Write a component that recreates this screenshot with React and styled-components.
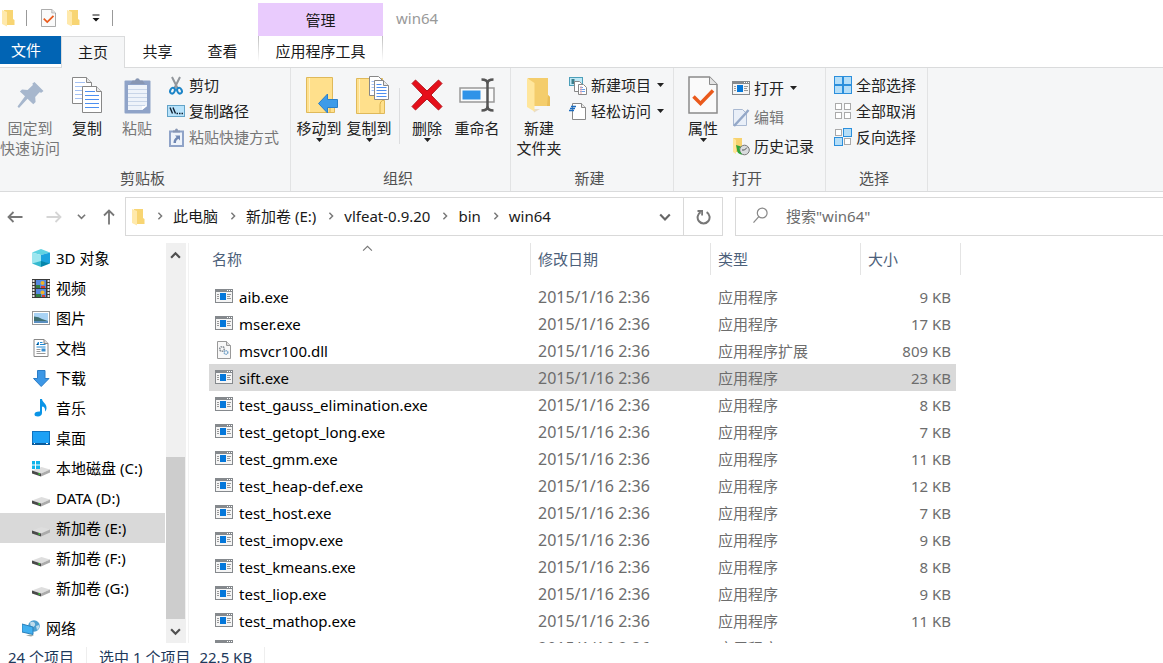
import { useState } from 'react';
import styled, { createGlobalStyle } from 'styled-components';

const FOLDERS = ['此电脑', '新加卷 (E:)', 'vlfeat-0.9.20', 'bin', 'win64'];

const PLACES = [
  { name: '3D 对象', icon: <CubeIcon /> },
  { name: '视频', icon: <FilmIcon /> },
  { name: '图片', icon: <PictureIcon /> },
  { name: '文档', icon: <DocumentIcon /> },
  { name: '下载', icon: <DownloadIcon /> },
  { name: '音乐', icon: <MusicIcon /> },
  { name: '桌面', icon: <DesktopIcon /> },
  { name: '本地磁盘 (C:)', icon: <DriveIcon system /> },
  { name: 'DATA (D:)', icon: <DriveIcon /> },
  { name: '新加卷 (E:)', icon: <DriveIcon /> },
  { name: '新加卷 (F:)', icon: <DriveIcon /> },
  { name: '新加卷 (G:)', icon: <DriveIcon /> },
];

const FILES = [
  ['aib.exe', 9],
  ['mser.exe', 17],
  ['msvcr100.dll', 809],
  ['sift.exe', 23],
  ['test_gauss_elimination.exe', 8],
  ['test_getopt_long.exe', 7],
  ['test_gmm.exe', 11],
  ['test_heap-def.exe', 12],
  ['test_host.exe', 7],
  ['test_imopv.exe', 9],
  ['test_kmeans.exe', 8],
  ['test_liop.exe', 9],
  ['test_mathop.exe', 11],
  ['test_mathop_abs.exe', 8],
];

const GlobalStyle = createGlobalStyle`
  * {
    box-sizing: border-box;
  }
  body {
    margin: 0;
    background: #fff;
    overflow: hidden;
  }
  body, button, input {
    font: 15px/20px 'Noto Sans', 'Noto Sans CJK SC', sans-serif;
    color: #1a1a1a;
  }
  button {
    padding: 0;
    border: 0;
    background: none;
    white-space: nowrap;
  }
  a {
    color: inherit;
    text-decoration: none;
  }
  svg {
    display: block;
    flex: none;
  }
`;

const Window = styled.div`
  height: 100vh;
  display: flex;
  flex-direction: column;
`;

const TitleBar = styled.header`
  display: flex;
  height: 36px;
  flex: none;
`;

const QuickAccess = styled.div`
  width: 258px;
  padding-left: 2px;
  display: flex;
  align-items: center;
  gap: 11px;
`;

const QuickLine = styled.span`
  width: 1px;
  height: 16px;
  margin-right: 3px;
  background: #999;
`;

const IconButton = styled.button`
  display: flex;
  align-items: center;
  justify-content: center;
`;

const ToolTitle = styled.div`
  width: 125px;
  margin-top: 3px;
  background: #e9cbfd;
  line-height: 34px;
  text-align: center;
`;

const WindowTitle = styled.div`
  padding-left: 13px;
  line-height: 36px;
  color: #999;
`;

const Tabs = styled.nav`
  display: flex;
  height: 31px;
  flex: none;
`;

const FileTab = styled.button`
  width: 61px;
  height: 28px;
  padding-right: 9px;
  background: #0164b4;
  color: #fff;
`;

const Tab = styled.button`
  width: ${({ $active }) => ($active ? 64 : 65)}px;
  height: ${({ $active }) => ($active ? 32 : 31)}px;
  padding-bottom: 2px;
  background: ${({ $active }) => ($active ? '#f5f6f7' : 'none')};
  border: ${({ $active }) => ($active ? '1px solid #dadbdc' : '0')};
  border-bottom: 0;
  position: relative;
`;

const ToolTab = styled.button`
  width: 125px;
  margin-left: 3px;
  padding-bottom: 2px;
  border: solid;
  border-width: 0 1px;
  border-image: linear-gradient(#bbb, #fff 80%) 1;
`;

const Ribbon = styled.div`
  display: flex;
  flex: none;
  height: 125px;
  background: #f5f6f7;
  border-top: 1px solid #dadbdc;
  border-bottom: 1px solid #dadbdc;
`;

const Group = styled.section`
  width: ${({ $width }) => $width}px;
  display: flex;
  flex: none;
  flex-direction: column;
  padding-top: 4px;
  border-right: 1px solid #e2e3e4;
`;

const GroupTools = styled.div`
  display: flex;
  flex: 1;
  align-items: flex-start;
  padding-left: ${({ $left }) => $left}px;
`;

const GroupTitle = styled.div`
  height: 23px;
  padding-right: 5px;
  text-align: center;
  color: #505050;
`;

const GroupLine = styled.span`
  width: 1px;
  height: 56px;
  margin: 16px 4px 0 5px;
  background: #dcdddf;
`;

const Big = styled.button`
  width: ${({ $width }) => $width}px;
  display: flex;
  flex-direction: column;
  align-items: center;
  color: ${({ disabled }) => (disabled ? '#777' : '#222')};
`;

const BigIcon = styled.span`
  height: 46px;
  display: flex;
  align-items: center;
`;

const Stack = styled.div`
  display: flex;
  flex-direction: column;
  padding-left: ${({ $left }) => $left}px;
  padding-top: ${({ $tall }) => ($tall ? 3 : 0)}px;
  gap: ${({ $tall }) => ($tall ? 3 : 0)}px;
`;

const Small = styled.button`
  height: 26px;
  display: flex;
  align-items: center;
  gap: 4px;
  color: ${({ disabled }) => (disabled ? '#777' : '#222')};

  > svg {
    margin-left: 2px;
  }
`;

const SmallIcon = styled.span`
  width: 18px;
  display: flex;
  justify-content: center;
`;

const NavBar = styled.div`
  display: flex;
  flex: none;
  padding: 5px 0 4px;
`;

const Arrows = styled.div`
  width: 125px;
  padding-left: 7px;
  display: flex;
  align-items: center;
  gap: 15px;

  button:first-child {
    margin-right: 8px;
  }
`;

const Address = styled.div`
  flex: 0 1 598px;
  height: 39px;
  padding-left: 6px;
  display: flex;
  align-items: center;
  border: 1px solid #d9d9d9;
`;

const Crumb = styled.span`
  display: flex;
  align-items: center;
  gap: 9px;
  padding: 0 0 2px 11px;
`;

const AddressEnd = styled.div`
  display: flex;
  height: 100%;
  margin-left: auto;
  gap: 12px;
`;

const Refresh = styled(IconButton)`
  width: 39px;
  border-left: 1px solid #d9d9d9;
`;

const Search = styled.label`
  flex: 1;
  height: 39px;
  margin-left: 12px;
  padding: 0 0 2px 16px;
  display: flex;
  align-items: center;
  gap: 17px;
  border: 1px solid #d9d9d9;
  border-right: 0;
`;

const SearchInput = styled.input`
  flex: 1;
  min-width: 0;
  padding: 0;
  border: 0;
  outline: 0;

  &::placeholder {
    color: #6d6d6d;
    opacity: 1;
  }
`;

const Body = styled.div`
  display: flex;
  flex: 1;
  min-height: 0;
  padding-top: 3px;
  overflow: hidden;
`;

const Sidebar = styled.nav`
  width: 165px;
  flex: none;
  overflow: hidden;
`;

const Place = styled.a`
  height: 30px;
  padding-left: 32px;
  display: flex;
  align-items: center;
  gap: 6px;
  color: #000;
  background: ${({ $active }) => ($active ? '#d9d9d9' : 'none')};

  svg {
    width: 18px;
  }
`;

const Network = styled(Place)`
  margin-top: 10px;
  padding-left: 22px;
`;

const ScrollBar = styled.div`
  width: 20px;
  margin-left: 1px;
  padding-right: 1px;
  flex: none;
  display: flex;
  flex-direction: column;
  background: #f0f0f0;
`;

const ScrollButton = styled(IconButton)`
  height: 24px;
`;

const ScrollTrack = styled.div`
  flex: 1;
  display: flex;
  align-items: flex-end;
`;

const ScrollThumb = styled.div`
  width: 100%;
  height: 46%;
  background: #cdcdcd;
`;

const Files = styled.main`
  flex: 1;
  margin-left: 2px;
  padding-left: 20px;
  border-left: 1px solid #f2f2f2;
  overflow: hidden;
`;

const Table = styled.table`
  width: 752px;
  table-layout: fixed;
  border-spacing: 0;

  th {
    position: relative;
    height: 32px;
    padding: 0 0 0 7px;
    border-right: 1px solid #e4e4e4;
    font-weight: 400;
    text-align: left;
    color: #4c607a;
  }
  th:first-child {
    padding-left: 3px;
  }
  tbody::before {
    content: '';
    display: block;
    height: 8px;
  }
`;

const SortMark = styled.span`
  position: absolute;
  top: 0;
  left: 153px;
`;

const FileRow = styled.tr`
  td {
    height: 27px;
    padding: 0 0 0 7px;
    color: #6d6d6d;
    background: ${({ $selected }) => ($selected ? '#d9d9d9' : 'none')};
    background-clip: padding-box;
  }
  td:first-child {
    padding-left: 6px;
    color: #000;
  }
  td:nth-child(2) {
    font-size: 16px;
  }
  td:last-child {
    padding-right: 5px;
    border-right: 5px solid transparent;
    text-align: right;
  }
`;

const FileName = styled.span`
  display: flex;
  align-items: center;
  gap: 6px;

  svg {
    margin-bottom: 2px;
  }
`;

const StatusBar = styled.footer`
  display: flex;
  flex: none;
  height: 20px;
  padding: 4px 0 0 8px;
  overflow: hidden;
  color: #1e395b;
`;

const Status = styled.div`
  display: flex;
  gap: 9px;
  padding-right: 12px;
  margin-right: 12px;
  border-right: 1px solid #eee;
`;

function App() {
  const [selected, setSelected] = useState('sift.exe');

  return (
    <>
      <GlobalStyle />
      <Window>
        <TitleBar>
          <QuickAccess>
            <FolderIcon />
            <QuickLine />
            <IconButton aria-label="属性">
              <CheckDocIcon width={15} height={18} />
            </IconButton>
            <IconButton aria-label="新建文件夹">
              <FolderIcon />
            </IconButton>
            <IconButton aria-label="自定义快速访问工具栏">
              <svg width="10" height="8" viewBox="0 0 10 8">
                <path d="M1.500 1h7" stroke="#111" />
                <path d="M1.500 4h7L5 7.500z" fill="#111" />
              </svg>
            </IconButton>
            <QuickLine />
          </QuickAccess>
          <ToolTitle>管理</ToolTitle>
          <WindowTitle>win64</WindowTitle>
        </TitleBar>

        <Tabs>
          <FileTab>文件</FileTab>
          <Tab $active>主页</Tab>
          <Tab>共享</Tab>
          <Tab>查看</Tab>
          <ToolTab>应用程序工具</ToolTab>
        </Tabs>

        <Ribbon>
          <RibbonGroup title="剪贴板" width={291}>
            <BigButton icon={<PinIcon />} width={60} disabled>
              固定到
              <br />
              快速访问
            </BigButton>
            <BigButton icon={<CopyIcon />} width={54}>
              复制
            </BigButton>
            <BigButton icon={<PasteIcon />} width={46} disabled>
              粘贴
            </BigButton>
            <Stack $left={7}>
              <SmallButton icon={<ScissorsIcon />}>剪切</SmallButton>
              <SmallButton icon={<PathIcon />}>复制路径</SmallButton>
              <SmallButton icon={<ShortcutIcon />} disabled>
                粘贴快捷方式
              </SmallButton>
            </Stack>
          </RibbonGroup>
          <RibbonGroup title="组织" width={220} left={3}>
            <BigButton icon={<MoveToIcon />} width={50} menu>
              移动到
            </BigButton>
            <BigButton icon={<CopyToIcon />} width={50} menu>
              复制到
            </BigButton>
            <GroupLine />
            <BigButton icon={<DeleteIcon />} width={46} menu>
              删除
            </BigButton>
            <BigButton icon={<RenameIcon />} width={54}>
              重命名
            </BigButton>
          </RibbonGroup>
          <RibbonGroup title="新建" width={163} left={3}>
            <BigButton icon={<BigFolderIcon />} width={50}>
              新建
              <br />
              文件夹
            </BigButton>
            <Stack $left={5}>
              <SmallButton icon={<NewItemIcon />} menu>
                新建项目
              </SmallButton>
              <SmallButton icon={<EasyAccessIcon />} menu>
                轻松访问
              </SmallButton>
            </Stack>
          </RibbonGroup>
          <RibbonGroup title="打开" width={152} left={4}>
            <BigButton icon={<CheckDocIcon width={30} height={38} />} width={50} menu>
              属性
            </BigButton>
            <Stack $left={4} $tall>
              <SmallButton icon={<AppIcon />} menu>
                打开
              </SmallButton>
              <SmallButton icon={<EditIcon />} disabled>
                编辑
              </SmallButton>
              <SmallButton icon={<HistoryIcon />}>历史记录</SmallButton>
            </Stack>
          </RibbonGroup>
          <RibbonGroup title="选择" width={102} left={4}>
            <Stack $left={4}>
              <SmallButton icon={<SelectIcon on={[1, 1, 1, 1]} />}>全部选择</SmallButton>
              <SmallButton icon={<SelectIcon on={[0, 0, 0, 0]} />}>全部取消</SmallButton>
              <SmallButton icon={<SelectIcon on={[0, 1, 1, 0]} />}>反向选择</SmallButton>
            </Stack>
          </RibbonGroup>
        </Ribbon>

        <NavBar>
          <Arrows>
            <IconButton aria-label="后退">
              <ArrowIcon />
            </IconButton>
            <IconButton aria-label="前进" disabled>
              <ArrowIcon color="#d5d5d5" turn={180} />
            </IconButton>
            <IconButton aria-label="最近浏览的位置">
              <Chevron size={9} color="#777" />
            </IconButton>
            <IconButton aria-label="向上">
              <ArrowIcon turn={90} />
            </IconButton>
          </Arrows>
          <Address>
            <FolderIcon />
            {FOLDERS.map((folder) => (
              <Crumb key={folder}>
                <Chevron size={8} color="#777" turn={-90} />
                <a href="#folder">{folder}</a>
              </Crumb>
            ))}
            <AddressEnd>
              <IconButton aria-label="以前的位置">
                <Chevron size={12} color="#666" />
              </IconButton>
              <Refresh aria-label="刷新">
                <svg width="15" height="16" viewBox="0 0 15 16" fill="none" stroke="#777" strokeWidth="2">
                  <path d="M4.600 3.200A6 6 0 1 0 10.600 3.200" />
                  <path d="M1.500 2h4.600v4.400" strokeWidth="1.800" />
                </svg>
              </Refresh>
            </AddressEnd>
          </Address>
          <Search>
            <svg width="17" height="17" viewBox="0 0 17 17" fill="none" stroke="#888" strokeWidth="1.200">
              <circle cx="10.200" cy="6" r="4.900" />
              <path d="M6.800 9.600L1.500 15.600" />
            </svg>
            <SearchInput type="text" aria-label="搜索" placeholder={'搜索"win64"'} />
          </Search>
        </NavBar>

        <Body>
          <Sidebar aria-label="导航窗格">
            {PLACES.map(({ name, icon }, i) => (
              <Place key={name} href="#place" $active={i === 9}>
                {icon}
                {name}
              </Place>
            ))}
            <Network href="#network">
              <NetworkIcon />
              网络
            </Network>
          </Sidebar>
          <ScrollBar>
            <ScrollButton aria-label="向上滚动">
              <Chevron size={11} color="#505050" turn={180} stroke={2} />
            </ScrollButton>
            <ScrollTrack>
              <ScrollThumb />
            </ScrollTrack>
            <ScrollButton aria-label="向下滚动">
              <Chevron size={11} color="#505050" stroke={2} />
            </ScrollButton>
          </ScrollBar>
          <Files>
            <Table>
              <colgroup>
                <col width="322" />
                <col width="180" />
                <col width="150" />
                <col width="100" />
              </colgroup>
              <thead>
                <tr>
                  <th>
                    名称
                    <SortMark>
                      <Chevron size={11} color="#777" turn={180} stroke={1} />
                    </SortMark>
                  </th>
                  <th>修改日期</th>
                  <th>类型</th>
                  <th>大小</th>
                </tr>
              </thead>
              <tbody>
                {FILES.map(([name, size]) => (
                  <FileRow
                    key={name}
                    $selected={name === selected}
                    onClick={() => setSelected(name)}
                  >
                    <td>
                      <FileName>
                        {name.endsWith('.dll') ? <DllIcon /> : <AppIcon />}
                        {name}
                      </FileName>
                    </td>
                    <td>2015/1/16 2:36</td>
                    <td>{name.endsWith('.dll') ? '应用程序扩展' : '应用程序'}</td>
                    <td>{size} KB</td>
                  </FileRow>
                ))}
              </tbody>
            </Table>
          </Files>
        </Body>

        <StatusBar>
          <Status>24 个项目</Status>
          <Status>
            <span>选中 1 个项目</span>
            <span>22.5 KB</span>
          </Status>
        </StatusBar>
      </Window>
    </>
  );
}
export default App;

function RibbonGroup({ title, width, left = 0, children }) {
  return (
    <Group $width={width}>
      <GroupTools $left={left}>{children}</GroupTools>
      <GroupTitle>{title}</GroupTitle>
    </Group>
  );
}

function BigButton({ icon, width, menu, disabled, children }) {
  return (
    <Big $width={width} disabled={disabled}>
      <BigIcon>{icon}</BigIcon>
      <span>{children}</span>
      {menu && <MenuMark />}
    </Big>
  );
}

function SmallButton({ icon, menu, disabled, children }) {
  return (
    <Small disabled={disabled}>
      <SmallIcon>{icon}</SmallIcon>
      {children}
      {menu && <MenuMark />}
    </Small>
  );
}

// icons
function MenuMark() {
  return (
    <svg width="7" height="4" viewBox="0 0 7 4">
      <path d="M0 0h7L3.500 4z" fill="#222" />
    </svg>
  );
}

function Chevron({ size, color, turn = 0, stroke = 1.8 }) {
  return (
    <svg width={size} height={size} viewBox="0 0 10 10" fill="none">
      <path
        d="M1 3l4 4 4-4"
        stroke={color}
        strokeWidth={stroke}
        transform={`rotate(${turn} 5 5)`}
      />
    </svg>
  );
}

function ArrowIcon({ color = '#777', turn = 0 }) {
  return (
    <svg width="16" height="16" viewBox="0 0 16 16" fill="none" stroke={color} strokeWidth="1.800">
      <g transform={`rotate(${turn} 8 8)`}>
        <path d="M1.500 8H15.500M6.500 3L1.500 8l5 5" />
      </g>
    </svg>
  );
}

function FolderIcon() {
  return (
    <svg width="13" height="18" viewBox="0 0 13 18">
      <path d="M2 1h9v9l1.500 1v5H3z" fill="#f8d573" />
      <path d="M0 1l5 2v14.500L0 15z" fill="#ffe9ab" />
    </svg>
  );
}

function BigFolderIcon() {
  return (
    <svg width="26" height="36" viewBox="0 0 26 36">
      <path d="M7 32l7 0-6 3.500z" fill="#e8dcc8" />
      <path d="M2 1h20v17l2 2v9H8z" fill="#f4cd6c" />
      <path d="M22 18l2 2v9h-3z" fill="#e9bd58" />
      <path d="M1 1l7.500 5v28.500L1 30z" fill="#ffe69c" />
    </svg>
  );
}

function CheckDocIcon({ width, height }) {
  return (
    <svg width={width} height={height} viewBox="0 0 30 38" preserveAspectRatio="none">
      <path d="M1 1h20.500l7.500 7.500V37H1z" fill="#fafafa" stroke="#8b8b8b" strokeWidth="1.500" />
      <path d="M21.500 1v7.500H29" fill="#e4e4e4" stroke="#8b8b8b" />
      <path d="M5.500 20.500l7 7L25 14.500" fill="none" stroke="#ea5a1c" strokeWidth="3.500" />
    </svg>
  );
}

function PinIcon() {
  return (
    <svg width="27" height="28" viewBox="0 0 27 28">
      <path
        d="M17.500 1l9 9-2.200 1.700-1.800-.5-4.300 4.800.4 5-2.300 2.300-5.800-5.600L2 27 .500 25.500 8 15.200 2.900 10.600 5 8.400l5.600.5L15.900 4l-.5-1.500z"
        fill="#a7b7cd"
      />
    </svg>
  );
}

function Sheet({ x, y, w = 19, h = 26, line = '#6c9ff0' }) {
  return (
    <g transform={`translate(${x} ${y})`}>
      <path d={`M.5.5h${w - 6}l5 5v${h - 5}h-${w - 1}z`} fill="#fff" stroke="#888" />
      <path d={`M${w - 5.5}.5v5h5`} fill="#e8e8e8" stroke="#888" />
      <path
        d={`M3 5.500h${w - 10}M3 9.500h${w - 6}M3 13.500h${w - 6}M3 17.500h${w - 6}M3 21.500h${w - 6}`}
        stroke={line}
      />
    </g>
  );
}

function CopyIcon() {
  return (
    <svg width="31" height="37" viewBox="0 0 31 37">
      <Sheet x={0} y={0} w={20} h={26} line="#a4c1f4" />
      <Sheet x={10} y={9} w={20} h={26} line="#4d8ff0" />
    </svg>
  );
}

function PasteIcon() {
  return (
    <svg width="27" height="38" viewBox="0 0 27 38">
      <rect x=".5" y="4.500" width="26" height="33" rx="1" fill="#8fa3c8" />
      <path d="M4 9h19v21l-5 4H4z" fill="#eef3fa" />
      <path d="M4 13.500h19M4 17.500h19M4 21.500h19M4 25.500h19M4 29.500h17" stroke="#c8d5e8" />
      <path d="M18 34v-4h5z" fill="#fff" />
      <path d="M6 8l2.500-3.500h2.500a2.700 3.600 0 0 1 5 0h2.500L21 8z" fill="#8796b3" />
    </svg>
  );
}

function ScissorsIcon() {
  return (
    <svg width="14" height="19" viewBox="0 0 14 19" fill="none">
      <path d="M3 1l5.500 11M11 1L5.500 12" stroke="#92979c" strokeWidth="2" />
      <ellipse cx="3.500" cy="14.700" rx="2.200" ry="3" stroke="#1c84c7" strokeWidth="2" transform="rotate(25 3.500 14.700)" />
      <ellipse cx="10.500" cy="14.700" rx="2.200" ry="3" stroke="#1c84c7" strokeWidth="2" transform="rotate(-25 10.500 14.700)" />
    </svg>
  );
}

function PathIcon() {
  return (
    <svg width="18" height="12" viewBox="0 0 18 12">
      <rect x=".5" y=".5" width="17" height="11" fill="#b9e3fb" stroke="#62a3c8" />
      <path d="M3 2.500l2.500 6M6 2.500l2.500 6" stroke="#123" strokeWidth="1.400" />
      <path d="M9.500 8.500H11M12 8.500h1.500M14.500 8.500H16" stroke="#123" strokeWidth="1.400" />
    </svg>
  );
}

function ShortcutIcon() {
  return (
    <svg width="15" height="19" viewBox="0 0 15 19">
      <rect x="1" y="3.500" width="13" height="14.500" fill="#eef3fa" stroke="#8fa3c8" strokeWidth="2" />
      <path d="M4 4.500V2.500h2a1.500 2 0 0 1 3 0h2v2z" fill="#8796b3" />
      <path d="M6 7.500h5v5L9.300 10.800C7.500 12 7 13 7 15H4.500c0-2.500 1-4.500 3.100-5.900z" fill="#6f87b3" />
    </svg>
  );
}

function YellowFolder() {
  return (
    <>
      <path d="M.5 1.500h26v22h2v13H.5z" fill="#ffe08c" stroke="#dfb95a" />
      <path d="M3.500 2v34" stroke="#fff0bf" />
      <path d="M26.500 23.500q-2.500 1-2.500 4v9" fill="none" stroke="#d9b04c" />
    </>
  );
}

function MoveToIcon() {
  return (
    <svg width="39" height="38" viewBox="-6 0 39 38">
      <YellowFolder />
      <path d="M12.500 27.500l9-9.500v5.500h10v8h-10V37z" fill="#3d9be9" stroke="#2a7fc9" />
    </svg>
  );
}

function CopyToIcon() {
  return (
    <svg width="39" height="39" viewBox="-6 0 39 39">
      <g transform="translate(0 1)">
        <YellowFolder />
      </g>
      <path d="M13.500.5h9l5 5v14h-14z" fill="#fff" stroke="#888" />
      <path d="M15.500 5.500h3M15.500 8.500h3M15.500 11.500h3M15.500 14.500h3" stroke="#a4c1f4" />
      <path d="M18.500 4.500h9l5 5v14h-14z" fill="#fff" stroke="#888" />
      <path d="M27.500 4.500v5h5" fill="#e8e8e8" stroke="#888" />
      <path d="M20.500 8.500h5M20.500 11.500h10M20.500 14.500h10M20.500 17.500h10M20.500 20.500h10" stroke="#4d8ff0" />
    </svg>
  );
}

function DeleteIcon() {
  return (
    <svg width="32" height="32" viewBox="0 0 32 32">
      <path
        d="M4.500 1L16 12 27.500 1 31 4.500 20 16l11 11.500-3.500 3.500L16 20 4.500 31 1 27.500 12 16 1 4.500z"
        fill="#e60f1a"
        stroke="#b5121a"
      />
    </svg>
  );
}

function RenameIcon() {
  return (
    <svg width="36" height="34" viewBox="0 0 36 34">
      <rect x="1" y="10" width="34" height="14" fill="#fafafa" stroke="#999" strokeWidth="1.500" />
      <rect x="3.500" y="12.500" width="18" height="9" fill="#2f93e8" />
      <path d="M28.500 4v26" stroke="#555" strokeWidth="2.500" />
      <path d="M22.500 1.500q6 0 6 4 0-4 6-4M22.500 32.500q6 0 6-4 0 4 6 4" stroke="#555" strokeWidth="2.500" fill="none" />
    </svg>
  );
}

function NewItemIcon() {
  return (
    <svg width="18" height="19" viewBox="0 0 18 19">
      <rect x=".5" y="1.500" width="13" height="8" fill="#bfe8f5" stroke="#4c9fba" />
      <rect x="2.500" y="3" width="3" height="5" fill="#3c7f8c" />
      <path d="M5.500 5.500h5l2 2v8h-7z" fill="#fff" stroke="#888" />
      <path d="M9.500 8.500h5l3 3v7h-8z" fill="#fff" stroke="#888" />
      <path d="M11 11.500h3M11 13.500h5M11 15.500h5" stroke="#6aa0e8" />
      <path d="M12 10v8" stroke="#f2a5a5" />
    </svg>
  );
}

function EasyAccessIcon() {
  return (
    <svg width="18" height="19" viewBox="0 0 18 19">
      <path d="M3.500 1.500h9l4 4v12h-13z" fill="#fff" stroke="#888" />
      <path d="M12.500 1.500v4h4" fill="#e8e8e8" stroke="#888" />
      <path d="M2 4.500h5M1 6.500h5M0 8.500h5" stroke="#1b6cc0" strokeWidth="1.300" />
    </svg>
  );
}

function AppIcon() {
  return (
    <svg width="18" height="14" viewBox="0 0 18 14">
      <rect x=".5" y=".5" width="17" height="13" fill="#f5f5f5" stroke="#85898d" />
      <path d="M0 0h18v3H0z" fill="#85898d" />
      <path d="M12 1.500h1M14 1.500h1M16 1.500h1" stroke="#fff" />
      <path d="M2 5.500h2M2 7.500h2M2 9.500h2M12 5.500h4M12 7.500h3M12 9.500h4" stroke="#999" />
      <rect x="5" y="4" width="6" height="7" fill="#0477da" />
    </svg>
  );
}

function EditIcon() {
  return (
    <svg width="18" height="19" viewBox="0 0 18 19">
      <path d="M1.500 1.500h9l4 4v12h-13z" fill="#e9eff8" stroke="#a9b9d2" />
      <path d="M2 18L14 5l2.500-3" stroke="#94a8c8" strokeWidth="2.500" fill="none" />
    </svg>
  );
}

function HistoryIcon() {
  return (
    <svg width="18" height="19" viewBox="0 0 18 19">
      <path d="M1 1h9v14H4z" fill="#f7d26f" />
      <path d="M1 1l3 2v14l-3-2z" fill="#ffe69c" />
      <circle cx="12.500" cy="13" r="4.800" fill="#d9dcde" stroke="#777" />
      <path d="M12.500 13l2.500-2.500M12.500 13H10" stroke="#555" />
      <path d="M4 8l5 1.500-1.500 1.500c0 3 1 5 3 6.500-4 0-5.500-2.500-5.500-5z" fill="#2ea43a" />
    </svg>
  );
}

function SelectIcon({ on }) {
  return (
    <svg width="18" height="18" viewBox="0 0 18 18">
      {on.map((v, i) => {
        const x = (i % 2) * 9;
        const y = i > 1 ? 9 : 0;
        return v ? (
          <rect key={i} x={x + 0.5} y={y + 0.5} width="8" height="8" fill="#b5def8" stroke="#2b8fdc" />
        ) : (
          <rect key={i} x={x + 1.5} y={y + 1.5} width="6" height="6" fill="#fff" stroke="#aaa" />
        );
      })}
    </svg>
  );
}

function CubeIcon() {
  return (
    <svg width="18" height="18" viewBox="0 0 18 18">
      <path d="M9 0l9 3.500L9 6 0 3.500z" fill="#5fd3e2" />
      <path d="M0 3.500L9 6v7l-9 1.500z" fill="#9ce6ef" />
      <path d="M18 3.500L9 6v7l9 1.500z" fill="#1ba3de" />
      <path d="M0 14.500L9 12v6z" fill="#35b9cf" />
      <path d="M18 14.500L9 12v6z" fill="#0586ab" />
    </svg>
  );
}

function FilmIcon() {
  return (
    <svg width="18" height="19" viewBox="0 0 18 19">
      <path d="M0 0h18v19H0z" fill="#3a3a3a" />
      <path d="M1.500 1v18M16.500 1v18" stroke="#e8e8e8" strokeWidth="2" strokeDasharray="2 1" />
      <path d="M4 1h10v8H4zM4 10h10v8H4z" fill="#5588e0" />
      <path d="M4 6h4v3H4zM4 15h5v3H4z" fill="#2f7d43" />
      <circle cx="10.500" cy="4" r="2" fill="#f0b429" />
      <circle cx="10.500" cy="13.500" r="2" fill="#f0b429" />
      <path d="M9 7h4v2H9zM10 16h3v2h-3z" fill="#d33b2c" />
    </svg>
  );
}

function PictureIcon() {
  return (
    <svg width="18" height="14" viewBox="0 0 18 14">
      <rect x=".5" y=".5" width="17" height="13" fill="#fff" stroke="#999" />
      <path d="M2 2h14v10H2z" fill="#a9d3f5" />
      <path d="M2 5.500q5 0 8 2.500l6 2v2H2z" fill="#3f6f72" />
      <path d="M2 10h14v2H2z" fill="#5a8fc0" />
    </svg>
  );
}

function DocumentIcon() {
  return (
    <svg width="15" height="18" viewBox="0 0 15 18">
      <path d="M.5.5h10l4 4v13H.5z" fill="#fff" stroke="#888" />
      <path d="M10.500.5v4h4" fill="#ddd" stroke="#888" />
      <path d="M3 6l2-3v3M6.500 3.500H9M6.500 5.500H12M3 8h9" stroke="#1e88d2" />
      <path d="M3 10.500h4M3 12.500h4M3 14.500h9" stroke="#999" />
      <rect x="8" y="9.500" width="4" height="3" fill="#3a8fd0" />
    </svg>
  );
}

function DownloadIcon() {
  return (
    <svg width="18" height="17" viewBox="0 0 18 17">
      <path d="M5.500.5h7.500v8h4L9.200 16.500 1.500 8.500h4z" fill="#3c97e6" stroke="#2b7cc7" />
    </svg>
  );
}

function MusicIcon() {
  return (
    <svg width="14" height="18" viewBox="0 0 14 18">
      <path
        d="M6 0h2c.3 3.500 5 4.500 4.500 9.500-.2 1.500-.7 2.300-1.500 3C11.500 9 10 7.700 8 7.500V14c0 2.200-1.800 3.500-4 3.500-2.500 0-3.500-1-3.500-2.300C.5 13.500 2.300 12.300 6 12.500z"
        fill="#0a94e6"
      />
    </svg>
  );
}

function DesktopIcon() {
  return (
    <svg width="18" height="14" viewBox="0 0 18 14">
      <rect x=".5" y=".5" width="17" height="12" fill="#1ea1f5" stroke="#0f73c0" />
      <path d="M0 13h18" stroke="#095a9b" strokeWidth="2" />
      <path d="M2 12.500h1M14 12.500h2" stroke="#fff" />
    </svg>
  );
}

function DriveIcon({ system }) {
  return (
    <svg width="18" height="17" viewBox="0 0 18 17">
      <g transform="translate(0 2)">
        <path d="M0 8.500L9.500 5 18 7.500 9 11.500z" fill="#dedede" />
        <path d="M0 8.500l9 3v3l-9-3z" fill="#4a4a4a" />
        <path d="M18 7.500l-9 4v3l9-4z" fill="#ababab" />
        <path d="M6.500 12h1.500" stroke="#38d430" strokeWidth="1.500" />
      </g>
      {system && <path d="M0 1h3v3.500H0zM4 1h4v3.500H4zM0 5.500h3V9H0zM4 5.500h4V9H4z" fill="#12b5ea" />}
    </svg>
  );
}

function NetworkIcon() {
  return (
    <svg width="18" height="17" viewBox="0 0 18 17">
      <circle cx="12" cy="6" r="5.800" fill="#4d9fcf" />
      <path d="M8 2.500q4-2 5 1t-4 4zM14 6l3-1q1 3-2 5z" fill="#bfdcec" />
      <path d="M0 4l11 3v7.500L0 12z" fill="#41b0f0" stroke="#2a7fb8" />
      <path d="M4 15.500l5 1 3-1-4-1z" fill="#9aa" />
    </svg>
  );
}

function DllIcon() {
  return (
    <svg width="18" height="18" viewBox="0 0 18 18">
      <path d="M2.500.5h9l4 4v13h-13z" fill="#f8f8f8" stroke="#999" />
      <path d="M11.500.5v4h4" fill="#ddd" stroke="#999" />
      <circle cx="7" cy="8" r="2.300" fill="none" stroke="#8d9399" strokeWidth="1.600" strokeDasharray="1.500 .6" />
      <circle cx="11" cy="11.500" r="1.800" fill="none" stroke="#7fa9cc" strokeWidth="1.500" strokeDasharray="1.300 .5" />
    </svg>
  );
}
